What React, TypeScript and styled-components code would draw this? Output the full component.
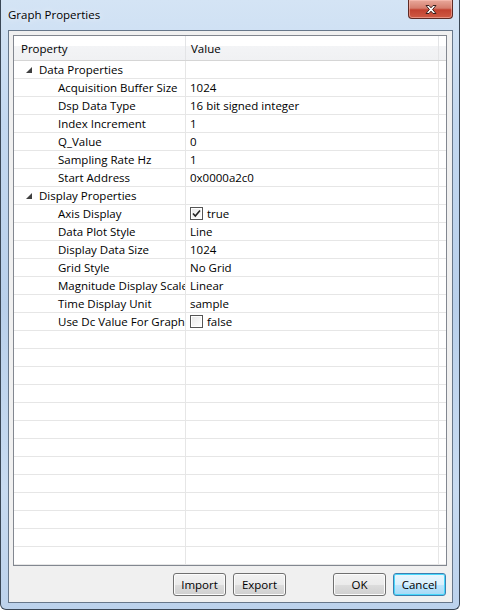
import styled, { createGlobalStyle } from "styled-components";

type Prop = { name: string; value: string; check?: boolean };
type Group = { title: string; items: Prop[] };

const groups: Group[] = [
  {
    title: "Data Properties",
    items: [
      { name: "Acquisition Buffer Size", value: "1024" },
      { name: "Dsp Data Type", value: "16 bit signed integer" },
      { name: "Index Increment", value: "1" },
      { name: "Q_Value", value: "0" },
      { name: "Sampling Rate Hz", value: "1" },
      { name: "Start Address", value: "0x0000a2c0" },
    ],
  },
  {
    title: "Display Properties",
    items: [
      { name: "Axis Display", value: "true", check: true },
      { name: "Data Plot Style", value: "Line" },
      { name: "Display Data Size", value: "1024" },
      { name: "Grid Style", value: "No Grid" },
      { name: "Magnitude Display Scale", value: "Linear" },
      { name: "Time Display Unit", value: "sample" },
      { name: "Use Dc Value For Graph", value: "false", check: false },
    ],
  },
];

const EMPTY_ROWS = 13;
const FONT = `"Open Sans", "Noto Sans", Arial, sans-serif`;

export default function App() {
  return (
    <>
      <GlobalStyle />
      <Window>
        <TitleBar>
          <Title>Graph Properties</Title>
          <CloseButton>
            <svg width="14" height="11" viewBox="0 0 14 11">
              <path
                d="M2 1.5 L5 1.5 L7 3.8 L9 1.5 L12 1.5 L8.6 5.5 L12 9.5 L9 9.5 L7 7.2 L5 9.5 L2 9.5 L5.4 5.5 Z"
                fill="#fff"
                stroke="#3b1f1c"
                strokeWidth="1"
                strokeLinejoin="round"
              />
            </svg>
          </CloseButton>
        </TitleBar>
        <Client>
          <Grid>
            <HeaderRow>
              <HeadCell $w={172}>Property</HeadCell>
              <HeadCell $w={253} $pad={5}>
                Value
              </HeadCell>
              <Rest />
            </HeaderRow>
            {groups.map((g) => (
              <div key={g.title}>
                <Row>
                  <NameCell $indent={12}>
                    <Expander width="6" height="6" viewBox="0 0 6 6">
                      <path d="M6 0 L6 6 L0 6 Z" fill="#404040" />
                    </Expander>
                    {g.title}
                  </NameCell>
                  <ValueCell />
                  <Rest />
                </Row>
                {g.items.map((p) => (
                  <Row key={p.name}>
                    <NameCell $indent={44}>{p.name}</NameCell>
                    <ValueCell>
                      {p.check !== undefined && (
                        <CheckBox>
                          {p.check && (
                            <svg width="11" height="11" viewBox="0 0 11 11">
                              <path
                                d="M2 5.5 L4.3 8 L9 2.5"
                                fill="none"
                                stroke="#222"
                                strokeWidth="1.6"
                              />
                            </svg>
                          )}
                        </CheckBox>
                      )}
                      {p.value}
                    </ValueCell>
                    <Rest />
                  </Row>
                ))}
              </div>
            ))}
            {Array.from({ length: EMPTY_ROWS }).map((_, i) => (
              <Row key={i}>
                <NameCell $indent={0} />
                <ValueCell />
                <Rest />
              </Row>
            ))}
          </Grid>
          <Footer>
            <Button>Import</Button>
            <Button>Export</Button>
            <Spacer />
            <Button>OK</Button>
            <Button $default>Cancel</Button>
          </Footer>
        </Client>
      </Window>
    </>
  );
}

const GlobalStyle = createGlobalStyle`
  body {
    margin: 0;
    background: #ffffff;
    font-family: ${FONT};
    font-size: 11.5px;
    color: #000;
  }
`;

const Window = styled.div`
  width: 460px;
  height: 610px;
  box-sizing: border-box;
  display: flex;
  flex-direction: column;
  padding: 0 6px 6px 7px;
  border: 1px solid #3a4756;
  border-top: none;
  border-radius: 0 0 6px 6px;
  background: linear-gradient(
    180deg,
    #d4e4f5 0%,
    #c3d8f0 20%,
    #b9d0eb 50%,
    #c8dbf1 80%,
    #bcd2ec 100%
  );
`;

const TitleBar = styled.div`
  height: 30px;
  display: flex;
  justify-content: space-between;
  align-items: flex-start;
  flex-shrink: 0;
`;

const Title = styled.div`
  padding-top: 7px;
  font-size: 11.5px;
  color: #000;
  text-shadow: 0 0 6px rgba(255, 255, 255, 0.9);
`;

const CloseButton = styled.div`
  width: 45px;
  height: 19px;
  box-sizing: border-box;
  display: flex;
  align-items: center;
  justify-content: center;
  border: 1px solid #5e2a24;
  border-top: none;
  border-radius: 0 0 4px 4px;
  background: linear-gradient(
    180deg,
    #e9a99b 0%,
    #d57e6e 45%,
    #c2412f 55%,
    #cf5a43 100%
  );
  box-shadow: inset 0 0 0 1px rgba(255, 200, 190, 0.5);
`;

const Client = styled.div`
  flex: 1;
  display: flex;
  flex-direction: column;
  border: 1px solid #67778a;
  background: #f0f0f0;
  padding: 4px 5px 0 4px;
  min-height: 0;
`;

const Grid = styled.div`
  flex: 1;
  border: 1px solid #828790;
  background: #fff;
  overflow: hidden;
  min-height: 0;
`;

const HeaderRow = styled.div`
  display: flex;
  height: 24px;
  border-bottom: 1px solid #d5d5d5;
  background: linear-gradient(180deg, #ffffff 0%, #ffffff 40%, #f3f4f6 41%, #f0f1f3 100%);
`;

const HeadCell = styled.div<{ $w: number; $pad?: number }>`
  width: ${(p) => p.$w}px;
  flex-shrink: 0;
  display: flex;
  align-items: center;
  padding-left: ${(p) => p.$pad ?? 7}px;
  padding-top: 1px;
  box-sizing: border-box;
  border-right: 1px solid #e3e4e6;
  white-space: nowrap;
`;

const Rest = styled.div`
  flex: 1;
`;

const Row = styled.div`
  display: flex;
  height: 17px;
  border-bottom: 1px solid #e6e6e6;
`;

const NameCell = styled.div<{ $indent: number }>`
  width: 172px;
  flex-shrink: 0;
  box-sizing: border-box;
  display: flex;
  align-items: center;
  padding-left: ${(p) => p.$indent}px;
  border-right: 1px solid #e6e6e6;
  white-space: nowrap;
  overflow: hidden;
  line-height: 17px;
`;

const ValueCell = styled.div`
  width: 253px;
  flex-shrink: 0;
  box-sizing: border-box;
  display: flex;
  align-items: center;
  padding-left: 4px;
  border-right: 1px solid #e6e6e6;
  white-space: nowrap;
  overflow: hidden;
  line-height: 17px;
`;

const Expander = styled.svg`
  margin-right: 7px;
  flex-shrink: 0;
`;

const CheckBox = styled.span`
  width: 13px;
  height: 13px;
  box-sizing: border-box;
  border: 1px solid #555;
  background: linear-gradient(135deg, #e8e8e8 0%, #ffffff 100%);
  box-shadow: inset 0 0 0 1px #fff;
  display: inline-flex;
  align-items: center;
  justify-content: center;
  margin-right: 4px;
  flex-shrink: 0;
`;

const Footer = styled.div`
  display: flex;
  gap: 7px;
  padding: 7px 1px 6px 0;
  justify-content: flex-end;
  flex-shrink: 0;
`;

const Spacer = styled.div`
  width: 33px;
`;

const Button = styled.button<{ $default?: boolean }>`
  width: 53px;
  height: 23px;
  padding: 0;
  font-family: ${FONT};
  font-size: 11.5px;
  color: #000;
  border-radius: 3px;
  border: 1px solid ${(p) => (p.$default ? "#3c7fb1" : "#707070")};
  background: ${(p) =>
    p.$default
      ? "linear-gradient(180deg, #eaf6fd 0%, #d9f0fc 50%, #bee6fd 51%, #a7d9f5 100%)"
      : "linear-gradient(180deg, #f2f2f2 0%, #ebebeb 50%, #dddddd 51%, #cfcfcf 100%)"};
  box-shadow: inset 0 0 0 1px ${(p) => (p.$default ? "#48d8fb" : "#fcfcfc")};
`;
